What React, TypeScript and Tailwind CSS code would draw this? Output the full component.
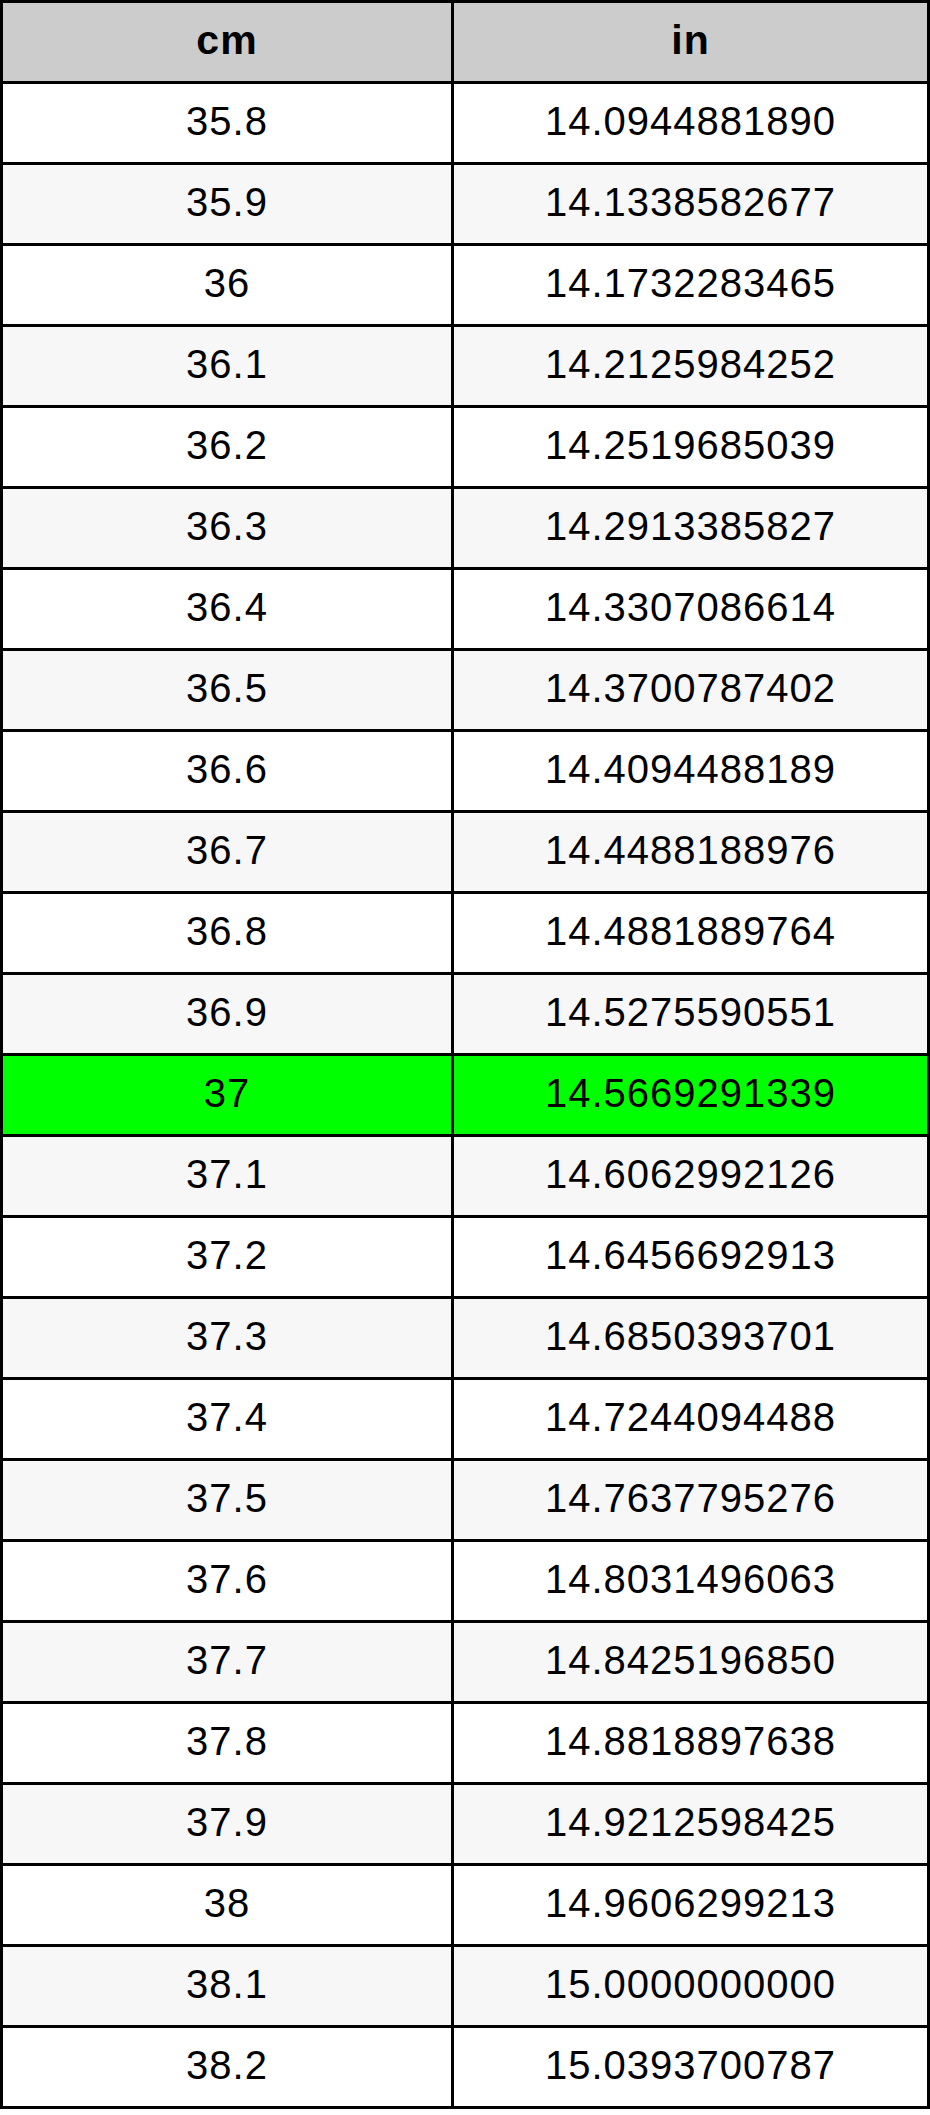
const rows: [string, string][] = [
  ["35.8", "14.0944881890"],
  ["35.9", "14.1338582677"],
  ["36", "14.1732283465"],
  ["36.1", "14.2125984252"],
  ["36.2", "14.2519685039"],
  ["36.3", "14.2913385827"],
  ["36.4", "14.3307086614"],
  ["36.5", "14.3700787402"],
  ["36.6", "14.4094488189"],
  ["36.7", "14.4488188976"],
  ["36.8", "14.4881889764"],
  ["36.9", "14.5275590551"],
  ["37", "14.5669291339"],
  ["37.1", "14.6062992126"],
  ["37.2", "14.6456692913"],
  ["37.3", "14.6850393701"],
  ["37.4", "14.7244094488"],
  ["37.5", "14.7637795276"],
  ["37.6", "14.8031496063"],
  ["37.7", "14.8425196850"],
  ["37.8", "14.8818897638"],
  ["37.9", "14.9212598425"],
  ["38", "14.9606299213"],
  ["38.1", "15.0000000000"],
  ["38.2", "15.0393700787"],
]

export default function App() {
  return (
    <div className="w-[930px] bg-white font-['Liberation_Sans',Arial,sans-serif] text-black">
      <table className="w-[930px] border-separate border-spacing-[3px] bg-black text-center text-[40px] leading-none tracking-[1px]">
        <thead>
          <tr className="h-[78px] bg-[#cccccc]">
            <th className="w-[448px] p-0 pb-[4px] text-[41px] font-bold">cm</th>
            <th className="w-[473px] p-0 pb-[4px] text-[41px] font-bold">in</th>
          </tr>
        </thead>
        <tbody>
          {rows.map(([cm, inch], i) => {
            const bg = cm === "37" ? "bg-[#00ff00]" : i % 2 === 0 ? "bg-white" : "bg-[#f7f7f7]"
            return (
              <tr key={cm} className={`h-[78px] ${bg}`}>
                <td className="p-0 pb-[4px]">{cm}</td>
                <td className="p-0 pb-[4px]">{inch}</td>
              </tr>
            )
          })}
        </tbody>
      </table>
    </div>
  )
}
